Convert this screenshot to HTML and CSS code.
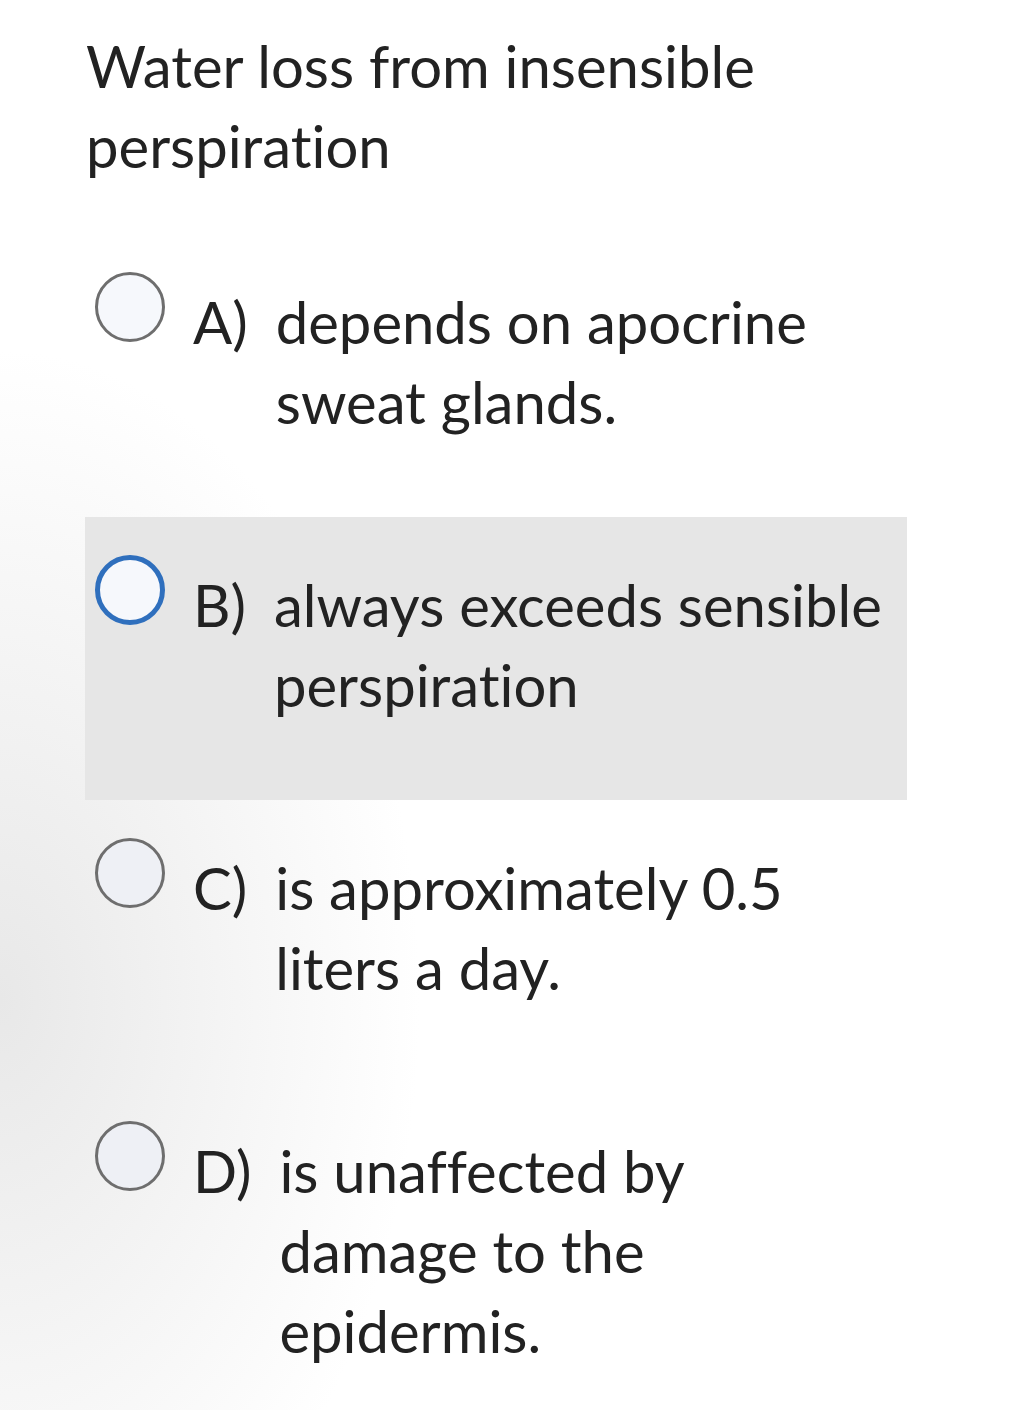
FILE: index.html
```html
<!DOCTYPE html>
<html lang="en">
<head>
<meta charset="utf-8">
<link rel="stylesheet" href="styles.css">
</head>
<body>
<div class="page">
  <h1 class="question">Water loss from insensible perspiration</h1>
  <div class="options">
    <div class="option">
      <span class="radio"></span>
      <span class="label">A)</span>
      <span class="text">depends on apocrine sweat glands.</span>
    </div>
    <div class="option selected">
      <span class="radio"></span>
      <span class="label">B)</span>
      <span class="text">always exceeds sensible perspiration</span>
    </div>
    <div class="option">
      <span class="radio"></span>
      <span class="label">C)</span>
      <span class="text">is approximately 0.5 liters a day.</span>
    </div>
    <div class="option">
      <span class="radio"></span>
      <span class="label">D)</span>
      <span class="text">is unaffected by damage to the epidermis.</span>
    </div>
  </div>
</div>
</body>
</html>
```

FILE: styles.css
```css
html, body {
  margin: 0;
  padding: 0;
}
body {
  width: 1021px;
  height: 1410px;
  overflow: hidden;
  font-family: Lato, "Liberation Sans", sans-serif;
  color: #222222;
  font-variant-ligatures: none;
  background:
    radial-gradient(ellipse 420px 650px at 0px 1000px, #e8e8e8 0%, rgba(255,255,255,0) 100%),
    #ffffff;
}
.page {
  padding: 26px 114px 0 85px;
}
.question {
  margin: 0 0 48px 1px;
  font-weight: 400;
  font-size: 58px;
  line-height: 80px;
  width: 720px;
}
.options {
  display: flex;
  flex-direction: column;
}
.option {
  display: flex;
  align-items: flex-start;
  padding: 48px 19px 75px 10px;
  font-size: 58px;
  line-height: 80px;
}
.option.selected {
  background: #e6e6e6;
}
.radio {
  flex: none;
  width: 64px;
  height: 64px;
  margin-top: -10px;
  border: 3px solid #6e6e6e;
  border-radius: 50%;
  background: #f6f8fc;
}
.option:nth-child(3) .radio,
.option:nth-child(4) .radio {
  background: #eef0f5;
}
.selected .radio {
  width: 60px;
  height: 60px;
  border: 5px solid #2f6fbd;
}
.label {
  flex: none;
  margin-left: 28px;
  margin-right: 28px;
}
.text {
  flex: 1;
}
```
